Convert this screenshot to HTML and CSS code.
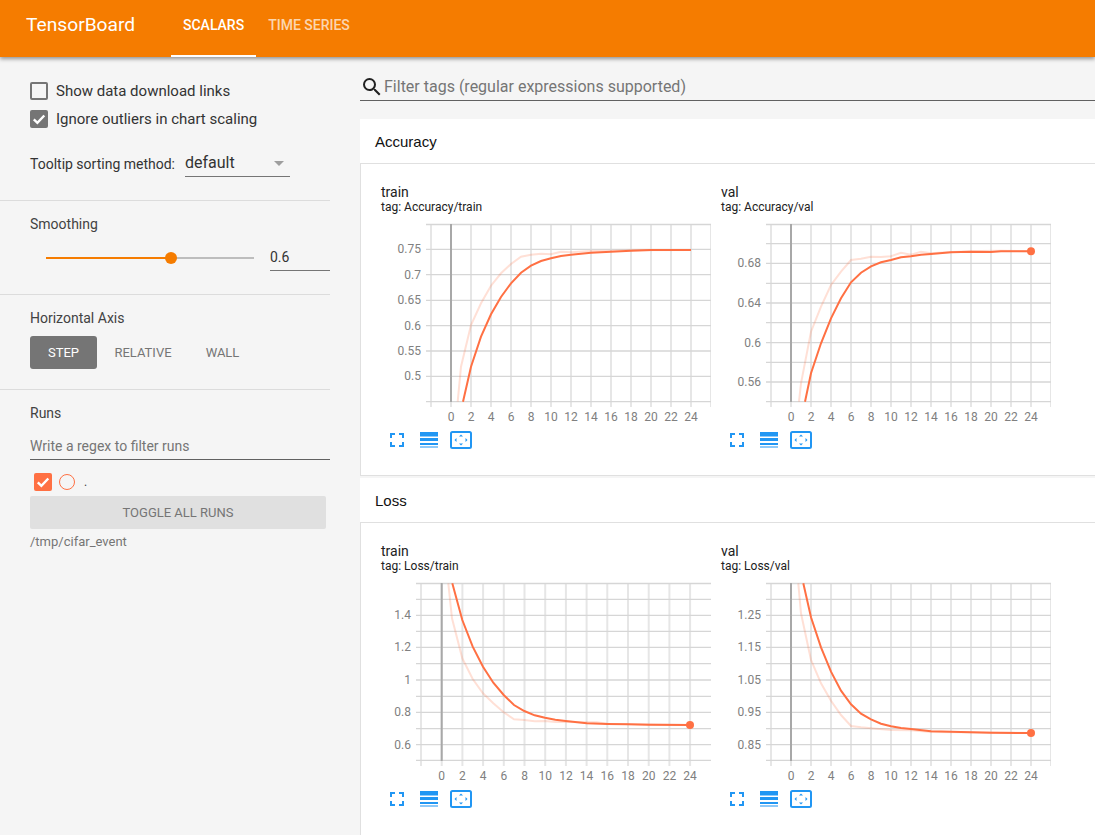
FILE: index.html
```html
<!DOCTYPE html>
<html lang="en">
<head>
<meta charset="utf-8">
<title>TensorBoard</title>
<link rel="stylesheet" href="styles.css">
</head>
<body>
<svg class="sprite" aria-hidden="true">
  <symbol id="i-full" viewBox="0 0 16 16"><path d="M2 6V2h4M10 2h4v4M14 10v4h-4M6 14H2v-4"/></symbol>
  <symbol id="i-lines" viewBox="0 0 18 16"><path d="M0 0h18v4.500H0zM0 6h18v3H0zM0 11h18v2H0zM0 14.400h18v1.200H0z"/></symbol>
  <symbol id="i-fit" viewBox="0 0 22 18"><path fill-rule="evenodd" d="M2.500 0h17A2.500 2.500 0 0 1 22 2.500v13a2.500 2.500 0 0 1-2.500 2.500h-17A2.500 2.500 0 0 1 0 15.500v-13A2.500 2.500 0 0 1 2.500 0zM2.500 2a.5.5 0 0 0-.5.5v13a.5.5 0 0 0 .5.5h17a.5.5 0 0 0 .5-.5v-13a.5.5 0 0 0-.5-.5zM11 3.500l2 2H9zM11 14.500l-2-2h4zM4.500 9l2-2v4zM17.500 9l-2 2V7z"/></symbol>
</svg>
<header class="topbar">
  <div class="brand">TensorBoard</div>
  <nav class="tabs">
    <a class="tab tab-active">SCALARS</a>
    <a class="tab">TIME SERIES</a>
  </nav>
</header>
<div class="layout">
  <aside class="sidebar">
    <section class="sec sec-options">
      <label class="check-row"><span class="box"></span>Show data download links</label>
      <label class="check-row"><span class="box box-on"><svg viewBox="0 0 18 18"><path d="M3.800 9.300l3.600 3.500 6.900-7.300"/></svg></span>Ignore outliers in chart scaling</label>
      <div class="sort-row">
        <span class="sort-label">Tooltip sorting method:</span>
        <div class="select"><span>default</span><i class="caret"></i></div>
      </div>
    </section>
    <section class="sec sec-smooth">
      <div class="sec-title">Smoothing</div>
      <div class="slider-row">
        <div class="slider"><div class="slider-fill"></div><div class="slider-thumb"></div></div>
        <div class="num-input">0.6</div>
      </div>
    </section>
    <section class="sec sec-axis">
      <div class="sec-title">Horizontal Axis</div>
      <div class="axis-btns">
        <span class="axis-btn axis-on">STEP</span>
        <span class="axis-btn axis-rel">RELATIVE</span>
        <span class="axis-btn axis-wall">WALL</span>
      </div>
    </section>
    <section class="sec sec-runs">
      <div class="sec-title">Runs</div>
      <div class="regex">Write a regex to filter runs</div>
      <div class="run-row">
        <span class="box run-box"><svg viewBox="0 0 18 18"><path d="M3.800 9.300l3.600 3.500 6.900-7.300"/></svg></span>
        <span class="run-dot"></span>
        <span class="run-name">.</span>
      </div>
      <div class="toggle">TOGGLE ALL RUNS</div>
      <div class="run-path">/tmp/cifar_event</div>
    </section>
  </aside>
  <main class="main">
    <div class="filter">
      <svg class="search" viewBox="0 0 24 24"><path d="M15.500 14h-.79l-.28-.27A6.470 6.470 0 0 0 16 9.500 6.500 6.500 0 1 0 9.500 16c1.610 0 3.090-.59 4.230-1.570l.27.28v.79l5 4.990L20.490 19l-4.990-5zm-6 0C7.010 14 5 11.990 5 9.500S7.010 5 9.500 5 14 7.010 14 9.500 11.990 14 9.500 14z"/></svg>
      <span class="filter-text">Filter tags (regular expressions supported)</span>
    </div>

    <section class="card">
      <h2 class="card-title">Accuracy</h2>
      <div class="charts">
        <article class="chart">
          <div class="chart-name">train</div>
          <div class="chart-tag">tag: Accuracy/train</div>
          <svg class="plot" viewBox="371 214 340 210">
            <path class="grid-v" d="M431 224v183m20-183v183m20-183v183m20-183v183m20-183v183m20-183v183m20-183v183m20-183v183m20-183v183m20-183v183m20-183v183m20-183v183m20-183v183m20-183v183m20-183v183"/>
            <path class="grid-h" d="M426 224.500h285M426 249.300h285M426 274.700h285M426 300.300h285M426 325.700h285M426 351h285M426 376.300h285M426 401.700h285"/>
            <path class="axis0" d="M451 224v178"/>
            <polyline class="ghost" points="457.700,401.700 461,366.700 471,325 481,303.300 491,285.700 501,273.300 511,264 521,256.700 531,254.700 541,253.700 551,254.300 561,251.700 571,252.300 591,251 611,251 631,250.300 691,250"/>
            <polyline class="curve" points="463,401.700 471,366.700 481,336.700 491,314.300 501,297 511,283.300 521,272.700 531,265.700 541,261 551,258.300 561,256 571,254.700 591,252.700 611,251.700 631,250.700 651,250 691,250"/>
            <text class="ty" x="421" y="253">0.75</text><text class="ty" x="421" y="278.500">0.7</text><text class="ty" x="421" y="304">0.65</text><text class="ty" x="421" y="329.500">0.6</text><text class="ty" x="421" y="355">0.55</text><text class="ty" x="421" y="380">0.5</text>
            <text class="tx" x="451" y="421">0</text><text class="tx" x="471" y="421">2</text><text class="tx" x="491" y="421">4</text><text class="tx" x="511" y="421">6</text><text class="tx" x="531" y="421">8</text><text class="tx" x="551" y="421">10</text><text class="tx" x="571" y="421">12</text><text class="tx" x="591" y="421">14</text><text class="tx" x="611" y="421">16</text><text class="tx" x="631" y="421">18</text><text class="tx" x="651" y="421">20</text><text class="tx" x="671" y="421">22</text><text class="tx" x="691" y="421">24</text>
          </svg>
          <div class="tools">
            <svg class="tool tool-full"><use href="#i-full"/></svg>
            <svg class="tool tool-lines"><use href="#i-lines"/></svg>
            <svg class="tool tool-fit"><use href="#i-fit"/></svg>
          </div>
        </article>
        <article class="chart">
          <div class="chart-name">val</div>
          <div class="chart-tag">tag: Accuracy/val</div>
          <svg class="plot" viewBox="711 214 340 210">
            <path class="grid-v" d="M771 224v183m20-183v183m20-183v183m20-183v183m20-183v183m20-183v183m20-183v183m20-183v183m20-183v183m20-183v183m20-183v183m20-183v183m20-183v183m20-183v183m20-183v183"/>
            <path class="grid-h" d="M766 224.500h285M766 243.700h285M766 263.300h285M766 283.300h285M766 303h285M766 322.700h285M766 342.700h285M766 362.300h285M766 382h285M766 401.700h285"/>
            <path class="axis0" d="M791 224v178"/>
            <polyline class="ghost" points="799,401.700 801,383.300 811,331.700 821,306.700 831,285 841,271.700 851,260 861,258.700 871,256.700 881,257 891,256.300 901,252.700 911,254.700 921,251.700 931,253.300 951,252 981,251 1001,250.700 1031,251.300"/>
            <polyline class="curve" points="805,401.700 811,373.300 821,343.300 831,318.300 841,298.300 851,282.300 861,272.700 871,266.300 881,262.300 891,260 901,257.300 911,256.300 921,254.700 931,254 951,252.300 971,251.800 991,252 1001,251.300 1031,251.300"/>
            <circle class="dot" cx="1031" cy="251.300" r="4"/>
            <text class="ty" x="761" y="267">0.68</text><text class="ty" x="761" y="306.500">0.64</text><text class="ty" x="761" y="346.500">0.6</text><text class="ty" x="761" y="385.500">0.56</text>
            <text class="tx" x="791" y="421">0</text><text class="tx" x="811" y="421">2</text><text class="tx" x="831" y="421">4</text><text class="tx" x="851" y="421">6</text><text class="tx" x="871" y="421">8</text><text class="tx" x="891" y="421">10</text><text class="tx" x="911" y="421">12</text><text class="tx" x="931" y="421">14</text><text class="tx" x="951" y="421">16</text><text class="tx" x="971" y="421">18</text><text class="tx" x="991" y="421">20</text><text class="tx" x="1011" y="421">22</text><text class="tx" x="1031" y="421">24</text>
          </svg>
          <div class="tools">
            <svg class="tool tool-full"><use href="#i-full"/></svg>
            <svg class="tool tool-lines"><use href="#i-lines"/></svg>
            <svg class="tool tool-fit"><use href="#i-fit"/></svg>
          </div>
        </article>
      </div>
    </section>

    <section class="card card-last">
      <h2 class="card-title">Loss</h2>
      <div class="charts">
        <article class="chart">
          <div class="chart-name">train</div>
          <div class="chart-tag">tag: Loss/train</div>
          <svg class="plot" viewBox="371 573 340 210">
            <path class="grid-v" d="M421 583v183m20.700-183v183m20.700-183v183m20.700-183v183m20.700-183v183m20.700-183v183m20.700-183v183m20.700-183v183m20.700-183v183m20.700-183v183m20.700-183v183m20.700-183v183m20.700-183v183m20.700-183v183"/>
            <path class="grid-h" d="M416 583.500h295M416 599.300h295M416 615.300h295M416 631.300h295M416 647.300h295M416 663.700h295M416 680h295M416 696.300h295M416 712.300h295M416 728.700h295M416 744.700h295M416 760.300h295"/>
            <path class="axis0" d="M441.700 583v178"/>
            <polyline class="ghost" points="448.300,583.300 452,618.300 462.300,658.300 472.700,679 483,693.300 493.300,703.300 503.700,712.300 514,719.300 524.300,720 534.700,721.300 545,721 555.300,722 565.700,722 596.700,722.300 607.300,723.700 690,725"/>
            <polyline class="curve" points="452.300,583.300 462.300,620 472.700,646.700 483,666.700 493.300,682.700 503.700,695 514,705 524.300,711 534.700,715.300 545,717.700 555.300,719.700 565.700,721 586.700,723.300 607.300,724 628,724.300 648.700,724.700 690,725"/>
            <circle class="dot" cx="690" cy="725" r="4"/>
            <text class="ty" x="411" y="619">1.4</text><text class="ty" x="411" y="651">1.2</text><text class="ty" x="411" y="683.500">1</text><text class="ty" x="411" y="716">0.8</text><text class="ty" x="411" y="748.500">0.6</text>
            <text class="tx" x="441.700" y="780">0</text><text class="tx" x="462.400" y="780">2</text><text class="tx" x="483.100" y="780">4</text><text class="tx" x="503.800" y="780">6</text><text class="tx" x="524.500" y="780">8</text><text class="tx" x="545.200" y="780">10</text><text class="tx" x="565.900" y="780">12</text><text class="tx" x="586.600" y="780">14</text><text class="tx" x="607.300" y="780">16</text><text class="tx" x="628" y="780">18</text><text class="tx" x="648.700" y="780">20</text><text class="tx" x="669.400" y="780">22</text><text class="tx" x="690" y="780">24</text>
          </svg>
          <div class="tools">
            <svg class="tool tool-full"><use href="#i-full"/></svg>
            <svg class="tool tool-lines"><use href="#i-lines"/></svg>
            <svg class="tool tool-fit"><use href="#i-fit"/></svg>
          </div>
        </article>
        <article class="chart">
          <div class="chart-name">val</div>
          <div class="chart-tag">tag: Loss/val</div>
          <svg class="plot" viewBox="711 573 340 210">
            <path class="grid-v" d="M771 583v183m20-183v183m20-183v183m20-183v183m20-183v183m20-183v183m20-183v183m20-183v183m20-183v183m20-183v183m20-183v183m20-183v183m20-183v183m20-183v183m20-183v183"/>
            <path class="grid-h" d="M766 583.500h285M766 599.300h285M766 615.300h285M766 631.300h285M766 647.300h285M766 663.700h285M766 680h285M766 696.300h285M766 712.300h285M766 728.700h285M766 744.700h285M766 760.300h285"/>
            <path class="axis0" d="M791 583v178"/>
            <polyline class="ghost" points="798.300,583.300 801,613.300 811,660 821,683.300 831,700.700 841,715 851,726 861,727.300 871,728.300 891,730 911,730.300 931,732 1031,733"/>
            <polyline class="curve" points="803.300,583.300 811,617.300 821,647.300 831,671.700 841,690.700 851,704.300 861,713.700 871,719.300 881,723.700 891,726.300 901,728 911,729 931,731.300 951,731.700 971,732.300 991,732.700 1031,733"/>
            <circle class="dot" cx="1031" cy="733" r="4"/>
            <text class="ty" x="761" y="619">1.25</text><text class="ty" x="761" y="651">1.15</text><text class="ty" x="761" y="683.500">1.05</text><text class="ty" x="761" y="716">0.95</text><text class="ty" x="761" y="748.500">0.85</text>
            <text class="tx" x="791" y="780">0</text><text class="tx" x="811" y="780">2</text><text class="tx" x="831" y="780">4</text><text class="tx" x="851" y="780">6</text><text class="tx" x="871" y="780">8</text><text class="tx" x="891" y="780">10</text><text class="tx" x="911" y="780">12</text><text class="tx" x="931" y="780">14</text><text class="tx" x="951" y="780">16</text><text class="tx" x="971" y="780">18</text><text class="tx" x="991" y="780">20</text><text class="tx" x="1011" y="780">22</text><text class="tx" x="1031" y="780">24</text>
          </svg>
          <div class="tools">
            <svg class="tool tool-full"><use href="#i-full"/></svg>
            <svg class="tool tool-lines"><use href="#i-lines"/></svg>
            <svg class="tool tool-fit"><use href="#i-fit"/></svg>
          </div>
        </article>
      </div>
    </section>
  </main>
</div>
</body>
</html>
```

FILE: styles.css
```css
* { box-sizing: border-box; }
html, body { margin: 0; height: 100%; }
body {
  height: 835px;
  overflow: hidden;
  display: flex;
  flex-direction: column;
  background: #f5f5f5;
  font-family: Roboto, "Liberation Sans", sans-serif;
  color: #212121;
}
.sprite { position: absolute; width: 0; height: 0; }

.topbar {
  flex: none;
  height: 57px;
  display: flex;
  background: #f57c00;
  color: #fff;
  box-shadow: 0 2px 4px rgba(0, 0, 0, .4);
  position: relative;
  z-index: 2;
}
.brand { margin-left: 26px; width: 145px; font-size: 19.2px; font-weight: 400; line-height: 50px; }
.tabs { display: flex; }
.tab {
  height: 57px;
  padding: 0 12px;
  font-size: 14px;
  font-weight: 500;
  line-height: 50px;
  color: rgba(255, 255, 255, .7);
}
.tab-active { color: #fff; border-bottom: 2px solid #fff; }

.layout { flex: 1; display: flex; min-height: 0; }
.sidebar {
  flex: none;
  width: 360px;
  padding-right: 30px;
  font-size: 14px;
  color: #424242;
}
.sec { padding-left: 30px; border-bottom: 1px solid #dcdcdc; }
.sec-options { height: 144px; padding-top: 25px; }
.sec-smooth { height: 94px; padding-top: 13px; }
.sec-axis { height: 95px; padding-top: 13px; }
.sec-runs { padding-top: 13px; border-bottom: 0; }
.sec-title { font-size: 14px; line-height: 20px; color: #424242; }

.check-row { display: flex; align-items: center; height: 18px; margin-bottom: 10px; font-size: 15px; color: #333; }
.box { width: 18px; height: 18px; margin-right: 8px; border: 2px solid #757575; border-radius: 2px; }
.box-on { background: #757575; border: 0; }
.box svg { display: block; width: 18px; height: 18px; fill: none; stroke: #fff; stroke-width: 2.4; }
.sort-row { display: flex; margin-top: 22px; }
.sort-label { margin-top: 6px; width: 155px; font-size: 14px; color: #333; }
.select {
  position: relative;
  width: 105px;
  height: 27px;
  border-bottom: 1px solid #757575;
  font-size: 16px;
  line-height: 26px;
  color: #333;
}
.caret {
  position: absolute;
  right: 6px;
  top: 11px;
  border-left: 5px solid transparent;
  border-right: 5px solid transparent;
  border-top: 5px solid #9e9e9e;
}

.slider-row { display: flex; align-items: flex-start; margin-top: 10px; }
.slider { position: relative; width: 208px; height: 2px; margin: 13px 16px 0; background: #bdbdbd; }
.slider-fill { width: 125px; height: 2px; background: #f57c00; }
.slider-thumb {
  position: absolute;
  left: 119px;
  top: -5px;
  width: 12px;
  height: 12px;
  border-radius: 50%;
  background: #f57c00;
}
.num-input { width: 60px; height: 27px; border-bottom: 1px solid #757575; font-size: 14px; line-height: 26px; color: #333; }

.axis-btns { display: flex; margin-top: 8px; }
.axis-btn { height: 33px; font-size: 13px; line-height: 34px; text-align: center; color: #757575; }
.axis-on { width: 67px; background: #757575; color: #fff; border-radius: 3px; }
.axis-rel { width: 92px; }
.axis-wall { width: 67px; }

.regex { height: 24px; margin-top: 13px; border-bottom: 1px solid #616161; font-size: 14px; line-height: 20px; color: #757575; }
.run-row { display: flex; align-items: center; height: 18px; margin: 13px 0 0 4px; }
.run-box { margin-right: 7px; background: #ff7043; border: 0; }
.run-dot { width: 16px; height: 16px; margin-right: 9px; border: 1.5px solid #ff7043; border-radius: 50%; }
.run-name { font-size: 12px; color: #424242; }
.toggle {
  width: 296px;
  height: 33px;
  margin-top: 5px;
  background: #e0e0e0;
  border-radius: 2px;
  font-size: 13px;
  line-height: 34px;
  text-align: center;
  color: #757575;
}
.run-path { margin-top: 4px; font-size: 13px; line-height: 17px; color: #757575; }

.main { flex: 1; min-width: 0; padding-top: 19px; overflow: hidden; }
.filter { display: flex; height: 25px; border-bottom: 1px solid #616161; margin-bottom: 18px; }
.search { width: 24px; height: 24px; margin-top: -1px; fill: #212121; }
.filter-text { font-size: 16px; line-height: 22px; color: #757575; }

.card { height: 357px; margin-bottom: 2px; background: #fff; border-left: 1px solid #e0e0e0; border-bottom: 1px solid #e0e0e0; }
.card-last { height: 380px; }
.card-title {
  margin: 0 0 0 -1px;
  height: 45px;
  padding-left: 15px;
  font-family: "Liberation Sans", Arial, sans-serif;
  font-size: 15px;
  font-weight: 400;
  line-height: 45px;
  color: #111;
  background: #fff;
  border-bottom: 1px solid #e0e0e0;
}
.charts { display: flex; padding-left: 10px; }
.chart { flex: none; width: 340px; }
.chart-name { margin: 20px 0 0 10px; font-size: 14px; line-height: 16px; color: #212121; }
.chart-tag { margin-left: 10px; font-size: 12px; line-height: 14px; color: #212121; }
.plot { display: block; width: 340px; height: 210px; margin-top: 0; }
.grid-v { fill: none; stroke: #e6e6e6; stroke-width: 2; }
.grid-h { fill: none; stroke: #d6d6d6; stroke-width: 1.3; }
.axis0 { fill: none; stroke: #a8a8a8; stroke-width: 2; }
.curve { fill: none; stroke: #ff7043; stroke-width: 2; }
.ghost { fill: none; stroke: #ff7043; stroke-opacity: .22; stroke-width: 2; }
.dot { fill: #ff7043; }
.ty, .tx { font-family: Roboto, sans-serif; font-size: 12px; fill: #808080; }
.ty { text-anchor: end; }
.tx { text-anchor: middle; }

.tools { display: flex; align-items: center; height: 22px; margin: 5px 0 0 18px; }
.tool { display: block; fill: #2196f3; stroke: none; }
.tool-full { width: 16px; height: 16px; margin-right: 15px; fill: none; stroke: #2196f3; stroke-width: 2; }
.tool-lines { width: 18px; height: 16px; margin-right: 12px; }
.tool-fit { width: 22px; height: 18px; }
```
